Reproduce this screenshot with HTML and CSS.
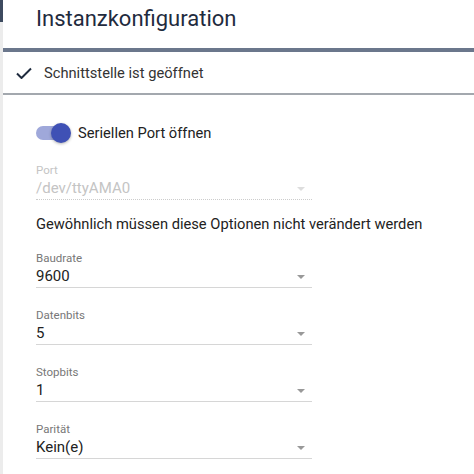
FILE: index.html
```html
<!DOCTYPE html>
<html>
<head>
  <title>Instanzkonfiguration</title>
  <link rel="stylesheet" href="styles.css">
</head>
<body>
  <div class="rail"><div class="rail-mark"></div></div>
  <div class="main">
    <div class="header">Instanzkonfiguration</div>
    <div class="status">
      <svg class="check" width="16" height="12" viewBox="0 0 16 12">
        <path d="M1 6.5 L5.5 11 L15 1.5" fill="none" stroke="#1f2b3e" stroke-width="2"/>
      </svg>
      <span>Schnittstelle ist geöffnet</span>
    </div>

    <div class="content">
      <div class="switch-row">
        <div class="switch"><div class="track"></div><div class="knob"></div></div>
        <span>Seriellen Port öffnen</span>
      </div>

      <div class="field disabled">
        <div class="label">Port</div>
        <div class="value">/dev/ttyAMA0<span class="arrow"></span></div>
      </div>

      <p class="note">Gewöhnlich müssen diese Optionen nicht verändert werden</p>

      <div class="field">
        <div class="label">Baudrate</div>
        <div class="value">9600<span class="arrow"></span></div>
      </div>
      <div class="field">
        <div class="label">Datenbits</div>
        <div class="value">5<span class="arrow"></span></div>
      </div>
      <div class="field">
        <div class="label">Stopbits</div>
        <div class="value">1<span class="arrow"></span></div>
      </div>
      <div class="field">
        <div class="label">Parität</div>
        <div class="value">Kein(e)<span class="arrow"></span></div>
      </div>
    </div>
  </div>
</body>
</html>
```

FILE: styles.css
```css
body {
  margin: 0;
  font-family: Roboto, "Liberation Sans", sans-serif;
  display: flex;
  min-height: 474px;
  background: #fff;
  color: #222;
}
.rail {
  width: 3px;
  background: #ececec;
  flex-shrink: 0;
}
.rail-mark {
  height: 22px;
  background: #3d4a5f;
}
.main {
  flex: 1;
}
.header {
  height: 52px;
  box-sizing: border-box;
  padding: 6px 0 0 33px;
  font-size: 22px;
  color: #1f2b3e;
  border-bottom: 4px solid #6b778c;
}
.status {
  height: 41px;
  display: flex;
  align-items: center;
  border-bottom: 2px solid #a3a8ae;
  font-size: 14.7px;
  color: #333;
}
.check {
  margin: 0 12px 0 13px;
}
.content {
  padding: 20px 0 0 33px;
  width: 276px;
}
.switch-row {
  display: flex;
  align-items: center;
  font-size: 14.7px;
  height: 36px;
}
.switch {
  position: relative;
  width: 36px;
  height: 20px;
  margin-right: 6px;
}
.track {
  position: absolute;
  left: 0;
  top: 3px;
  width: 32px;
  height: 14px;
  border-radius: 7px;
  background: #9fa8da;
}
.knob {
  position: absolute;
  left: 15px;
  top: 0;
  width: 20px;
  height: 20px;
  border-radius: 50%;
  background: #3f51b5;
  box-shadow: 0 1px 3px rgba(0, 0, 0, 0.3);
}
.field {
  margin-top: 20px;
}
.disabled {
  margin-top: 12px;
}
.note + .field {
  margin-top: 18px;
}
.label {
  font-size: 11.5px;
  color: #777;
  height: 14px;
}
.value {
  position: relative;
  font-size: 15px;
  height: 22px;
  line-height: 22px;
  border-bottom: 1px solid #d6d6d6;
}
.arrow {
  position: absolute;
  right: 7px;
  top: 10px;
  border-left: 4px solid transparent;
  border-right: 4px solid transparent;
  border-top: 4px solid #999;
}
.disabled .label,
.disabled .value {
  color: #c4c4c4;
}
.disabled .value {
  border-bottom: 1px dotted #ccc;
}
.disabled .arrow {
  border-top-color: #ddd;
}
.note {
  font-size: 14.7px;
  margin: 15px 0 0;
  white-space: nowrap;
  color: #222;
}
```
